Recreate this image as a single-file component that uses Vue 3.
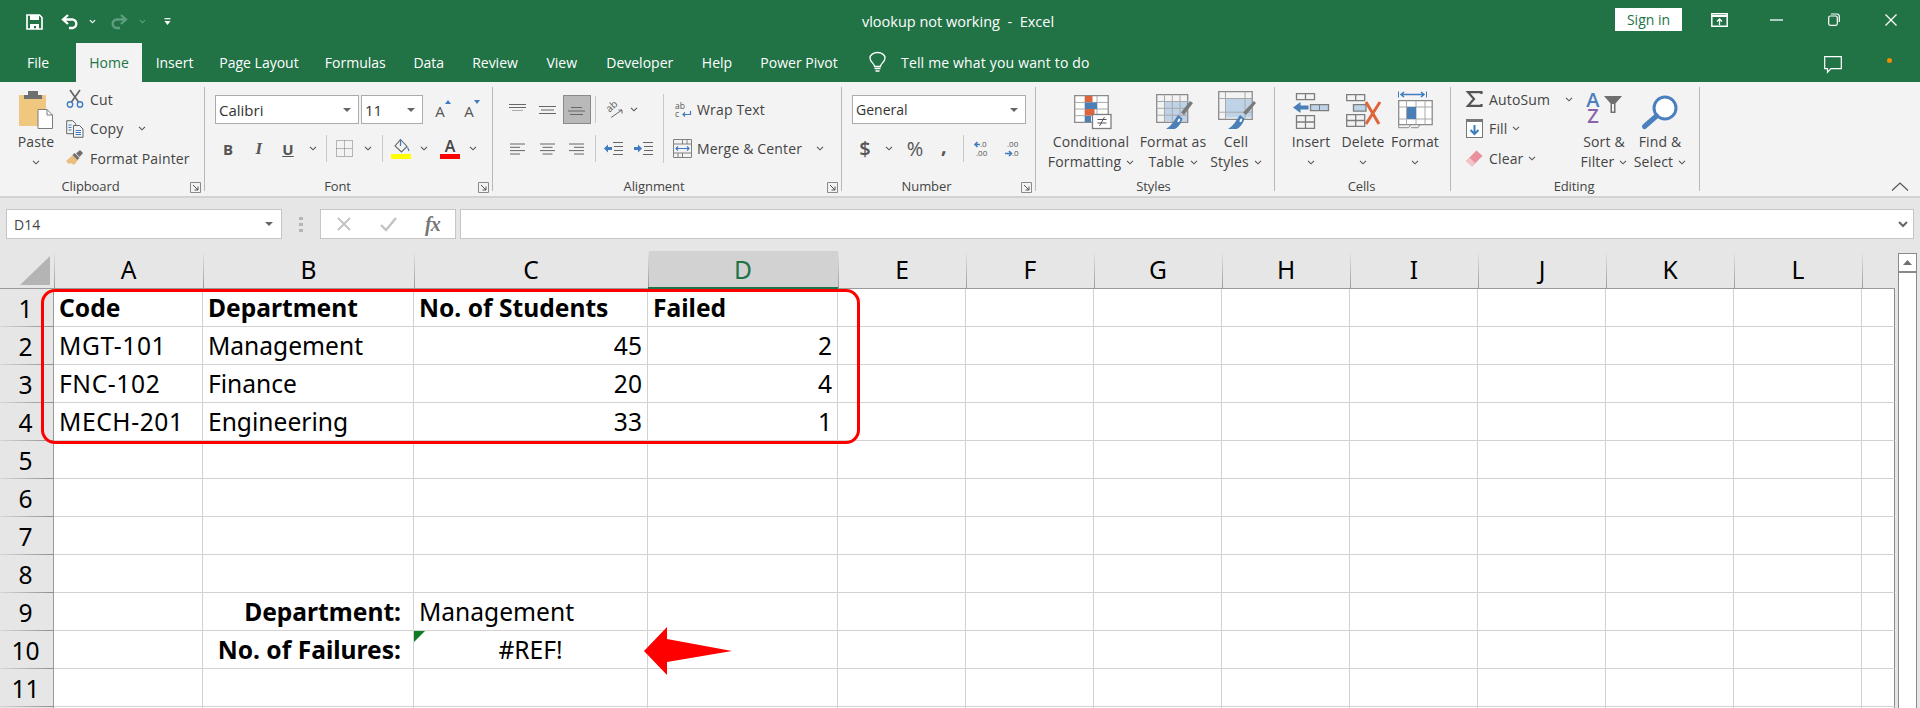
<script setup>
const tabs = [
  { t: 'File', w: 76 }, { t: 'Home', w: 66, on: true }, { t: 'Insert', w: 65 }, { t: 'Page Layout', w: 104 },
  { t: 'Formulas', w: 88.5 }, { t: 'Data', w: 58.5 }, { t: 'Review', w: 74 }, { t: 'View', w: 59.5 },
  { t: 'Developer', w: 96.5 }, { t: 'Help', w: 58 }, { t: 'Power Pivot', w: 106 }
]
const cols = [
  { n: 'A', w: 149 }, { n: 'B', w: 211 }, { n: 'C', w: 234 }, { n: 'D', w: 190 },
  { n: 'E', w: 128 }, { n: 'F', w: 128 }, { n: 'G', w: 128 }, { n: 'H', w: 128 },
  { n: 'I', w: 128 }, { n: 'J', w: 128 }, { n: 'K', w: 128 }, { n: 'L', w: 128 }, { n: '', w: 33 }
]
const gridColumns = '54px ' + cols.map(c => c.w + 'px').join(' ')
const rows = [1, 2, 3, 4, 5, 6, 7, 8, 9, 10, 11, 12]
const cells = {
  A1: ['Code', 'bold'], B1: ['Department', 'bold'], C1: ['No. of Students', 'bold'], D1: ['Failed', 'bold'],
  A2: ['MGT-101', 'code'], B2: ['Management'], C2: ['45', 'right'], D2: ['2', 'right'],
  A3: ['FNC-102', 'code'], B3: ['Finance'], C3: ['20', 'right'], D3: ['4', 'right'],
  A4: ['MECH-201', 'code'], B4: ['Engineering'], C4: ['33', 'right'], D4: ['1', 'right'],
  B9: ['Department:', 'bold label-right'], C9: ['Management'],
  B10: ['No. of Failures:', 'bold label-right'], C10: ['#REF!', 'center err']
}
const txt = k => (cells[k] ? cells[k][0] : '')
const cls = k => (cells[k] && cells[k][1]) || ''
</script>

<template>
  <div class="app">
    <svg class="defs" width="0" height="0" aria-hidden="true">
      <symbol id="chev" viewBox="0 0 8 5"><path d="M1 .8l3 3 3-3" fill="none" stroke="#555" stroke-width="1.1"/></symbol>
      <symbol id="launch" viewBox="0 0 11 11"><path d="M.5.5h10v10H.5z" fill="none" stroke="#8a8a8a"/><path d="M3 3l5 5M8 4.5V8H4.5" fill="none" stroke="#555"/></symbol>
      <symbol id="drop" viewBox="0 0 8 4"><path d="M0 0h8L4 4z" fill="#666"/></symbol>
    </svg>

    <header class="titlebar">
      <div class="qat">
        <svg class="q-save" viewBox="0 0 17 16"><path d="M1 1h12.5L16 3.5V15H1z" fill="none" stroke="#fff" stroke-width="1.7"/><path d="M4 1h9v5H4zM4 10h9v5h-3v-3H8v3H4z" fill="#fff"/></svg>
        <svg class="q-undo" viewBox="0 0 19 15"><path d="M7 1L2 5.5 7 10M2 5.5h10a5 4.5 0 0 1 0 8.5H8" fill="none" stroke="#fff" stroke-width="2.3"/></svg>
        <svg class="q-chev1" viewBox="0 0 8 5"><path d="M1 .8l3 3 3-3" fill="none" stroke="#fff" stroke-width="1.2"/></svg>
        <svg class="q-redo" viewBox="0 0 19 15"><path d="M12 1l5 4.5L12 10m5-4.5H7a5 4.5 0 0 0 0 8.5h4" fill="none" stroke="#5f9d80" stroke-width="2.3"/></svg>
        <svg class="q-chev2" viewBox="0 0 8 5"><path d="M1 .8l3 3 3-3" fill="none" stroke="#5f9d80" stroke-width="1.2"/></svg>
        <svg class="q-cust" viewBox="0 0 7 8"><path d="M.5.7h6" stroke="#fff" stroke-width="1.2"/><path d="M.5 3h6L3.500 7z" fill="#fff"/></svg>
      </div>
      <div class="doc-title">vlookup not working&nbsp; -&nbsp; Excel</div>
      <div class="win">
        <div class="signin">Sign in</div>
        <svg class="w-disp" viewBox="0 0 17 14"><path d="M.8.8h15.400v12.400H.8z" fill="none" stroke="#fff" stroke-width="1.500"/><path d="M.8 3h15.400" stroke="#fff" stroke-width="2"/><path d="M8.500 12V6M6 8.500L8.500 6 11 8.500" fill="none" stroke="#fff" stroke-width="1.300"/></svg>
        <svg class="w-min" viewBox="0 0 13 2"><path d="M0 1h13" stroke="#fff" stroke-width="1.300"/></svg>
        <svg class="w-rest" viewBox="0 0 12 13"><rect x=".7" y="3" width="8.600" height="9.300" rx="1.500" fill="none" stroke="#fff" stroke-width="1.200"/><path d="M3 1h6a2.300 2.300 0 0 1 2.300 2.300V9" fill="none" stroke="#fff" stroke-width="1.200"/></svg>
        <svg class="w-close" viewBox="0 0 12 12"><path d="M.5.500l11 11M11.500.500l-11 11" stroke="#fff" stroke-width="1.300"/></svg>
      </div>
    </header>

    <nav class="tabs">
      <div v-for="t in tabs" :key="t.t" class="tab" :class="{ on: t.on }" :style="{ width: t.w + 'px' }">{{ t.t }}</div>
      <svg class="bulb" viewBox="0 0 17 20"><path d="M5.500 14.500c0-3-4.500-4.500-4.500-8.500a7.500 5.500 0 0 1 15 0c0 4-4.500 5.500-4.500 8.500z" fill="none" stroke="#fff" stroke-width="1.300"/><path d="M5.500 16.500h6M6.500 19h4" stroke="#fff" stroke-width="1.400"/></svg>
      <div class="tell">Tell me what you want to do</div>
      <svg class="comment" viewBox="0 0 18 17"><path d="M.7.700h16.600v12H7l-3.500 3.500v-3.500H.7z" fill="none" stroke="#fff" stroke-width="1.200"/></svg>
      <span class="dot"></span>
    </nav>

    <section class="ribbon">
      <!-- Clipboard -->
      <div class="group g-clip">
        <div class="body clip-body">
          <div class="big paste">
            <div class="big-icon">
              <svg class="i-paste" viewBox="0 0 34 38"><rect y="4" width="27" height="31" rx="1" fill="#efc77f"/><path d="M9 0h10v4h4v4H5V4h4z" fill="#6f6f6f"/><path d="M19 18.500h9l5.500 5.500v13.500H19z" fill="#fff" stroke="#7d7d7d"/><path d="M28 18.500V24h5.500" fill="none" stroke="#7d7d7d"/></svg>
            </div>
            <div class="line">Paste</div>
            <div class="line"><svg class="chev"><use href="#chev"/></svg></div>
          </div>
          <div class="clip-list">
            <div class="item"><span class="slot"><svg class="i18" viewBox="0 0 18 18"><path d="M4 0l8.500 12M14 0L5.500 12" stroke="#666" stroke-width="1.700"/><circle cx="4" cy="14.500" r="2.700" fill="none" stroke="#3f7cbf" stroke-width="1.400"/><circle cx="14" cy="14.500" r="2.700" fill="none" stroke="#3f7cbf" stroke-width="1.400"/></svg></span>Cut</div>
            <div class="item"><span class="slot"><svg class="i18" viewBox="0 0 18 18"><path d="M.7.700h6l3 3v10h-9z" fill="#f3f3f3" stroke="#666"/><path d="M7.500 5.500h6l3.500 3.500v8.300H7.500z" fill="#f3f3f3" stroke="#666"/><path d="M2.500 5h3M2.500 7.500h3M2.500 10h3M9.500 10.500h5.500M9.500 12.500h5.500M9.500 14.500h5.500" stroke="#3f7cbf"/></svg></span>Copy<svg class="chev copy-chev"><use href="#chev"/></svg></div>
            <div class="item"><span class="slot"><svg class="i18" viewBox="0 0 18 16"><path d="M0 11l7-6 5 5-4 5-3-2-2 1z" fill="#e8bd7d"/><path d="M6.500 5l5 5 2-2-5-5z" fill="#6f6f6f"/><path d="M10 3.500l4-3.500 3 3-3.500 4z" fill="#6f6f6f"/></svg></span>Format Painter</div>
          </div>
        </div>
        <div class="label-row"><span class="label">Clipboard</span><svg class="launch"><use href="#launch"/></svg></div>
      </div>

      <!-- Font -->
      <div class="group g-font">
        <div class="body tool-body">
          <div class="font-top">
            <div class="box font-name">Calibri<svg class="drop"><use href="#drop"/></svg></div>
            <div class="box font-size">11<svg class="drop"><use href="#drop"/></svg></div>
            <div class="grow-a">A<svg class="tri" viewBox="0 0 6 4"><path d="M3 0l3 4H0z" fill="#3f7cbf"/></svg></div>
            <div class="grow-a">A<svg class="tri" viewBox="0 0 6 4"><path d="M0 0h6L3 4z" fill="#3f7cbf"/></svg></div>
          </div>
          <div class="font-row">
            <span class="fmt b">B</span>
            <span class="fmt i">I</span>
            <span class="fmt u">U</span>
            <span class="ctr"><svg class="chev"><use href="#chev"/></svg></span>
            <span class="sep-t"></span>
            <svg class="i-border" viewBox="0 0 17 17"><path d="M.5.500h16v16H.5zM8.500.500v16M.5 8.500h16" fill="none" stroke="#777" stroke-dasharray="1 1"/></svg>
            <span class="ctr"><svg class="chev"><use href="#chev"/></svg></span>
            <span class="sep-t"></span>
            <svg class="i-fill" viewBox="0 0 20 21"><path d="M9.500 1.500l6.500 7-5.500 5.500L4 8z" fill="#f3f3f3" stroke="#666" stroke-width="1.100"/><path d="M9.500 1.500V8" stroke="#3f7cbf" stroke-width="1.300"/><path d="M16.500 9.500c1 1.500 1.500 2.500 1 3.500" stroke="#3f7cbf" stroke-width="1.300" fill="none"/><rect y="16" width="20" height="5" fill="#ffff00"/></svg>
            <span class="ctr"><svg class="chev"><use href="#chev"/></svg></span>
            <span class="color-a">A</span>
            <span class="ctr"><svg class="chev"><use href="#chev"/></svg></span>
          </div>
        </div>
        <div class="label-row"><span class="label">Font</span><svg class="launch"><use href="#launch"/></svg></div>
      </div>

      <!-- Alignment -->
      <div class="group g-align">
        <div class="body align-body">
          <div class="align-grid">
            <svg class="al" viewBox="0 0 17 14"><path d="M0 1.500h17M0 4.500h17" stroke="#666"/><path d="M3 7.500h11" stroke="#aaa"/></svg>
            <svg class="al" viewBox="0 0 17 14"><path d="M0 3.500h17M2 7h13M0 10.500h17" stroke="#666"/></svg>
            <span class="al-on"><svg class="al" viewBox="0 0 17 14"><path d="M3 4.500h11M0 8h17M2 11.500h13" stroke="#666"/></svg></span>
            <span class="sep-a"></span>
            <svg class="orient" viewBox="0 0 19 17"><text x="3" y="9" transform="rotate(-42 8 7)" class="svgtxt" font-size="10">ab</text><path d="M7 16.500L18 9M18 9h-3.500M18 9v3.500" fill="none" stroke="#666"/></svg>
            <span class="ctr ori-chev"><svg class="chev"><use href="#chev"/></svg></span>
            <svg class="al2" viewBox="0 0 15 12"><path d="M0 1h15M0 4.300h10M0 7.600h15M0 11h10" stroke="#666"/></svg>
            <svg class="al2" viewBox="0 0 15 12"><path d="M0 1h15M2.500 4.300h10M0 7.600h15M2.500 11h10" stroke="#666"/></svg>
            <svg class="al2" viewBox="0 0 15 12"><path d="M0 1h15M5 4.300h10M0 7.600h15M5 11h10" stroke="#666"/></svg>
            <span class="sep-a"></span>
            <svg class="indent" viewBox="0 0 19 16"><path d="M9 1.500h10M10 5.500h9M10 9.500h9M9 13.500h10" stroke="#666"/><path d="M0 7.500l4-4v2.500h4v3H4v2.500z" fill="#3f7cbf"/></svg>
            <span class="ctr"><svg class="indent" viewBox="0 0 19 16"><path d="M9 1.500h10M10 5.500h9M10 9.500h9M9 13.500h10" stroke="#666"/><path d="M8 7.500l-4-4v2.500H0v3h4v2.500z" fill="#3f7cbf"/></svg></span>
          </div>
          <span class="vsep"></span>
          <div class="wrap-col">
            <div class="item wrap-item"><svg class="i-wrap" viewBox="0 0 17 16"><text x="0" y="6.500" class="svgtxt" font-size="8.500">ab</text><text x="0" y="15" class="svgtxt" font-size="8.500">c</text><path d="M15.500 9v3.500H8M10 10.500l-2 2 2 2" fill="none" stroke="#3f7cbf" stroke-width="1.200"/></svg>Wrap Text</div>
            <div class="item merge-item"><svg class="i-merge" viewBox="0 0 19 19"><path d="M.5.500h18v18H.5zM.5 5h18M.5 14h18M9.500.500V5M9.500 14v4.500M5 14v4.500M14 .500V5" fill="#f3f3f3" stroke="#808080"/><path d="M3 9.500h13M5 7.500l-2 2 2 2M14 7.500l2 2-2 2" fill="none" stroke="#3f7cbf" stroke-width="1.200"/></svg>Merge &amp; Center<svg class="chev merge-chev"><use href="#chev"/></svg></div>
          </div>
        </div>
        <div class="label-row"><span class="label">Alignment</span><svg class="launch"><use href="#launch"/></svg></div>
      </div>

      <!-- Number -->
      <div class="group g-num">
        <div class="body tool-body">
          <div class="box num-box">General<svg class="drop"><use href="#drop"/></svg></div>
          <div class="num-row">
            <span class="ctr sym dollar">$</span>
            <span class="ctr"><svg class="chev"><use href="#chev"/></svg></span>
            <span class="ctr sym">%</span>
            <span class="ctr sym comma">,</span>
            <span class="sep-n"></span>
            <svg class="i-dec" viewBox="0 0 16 18"><text x="6" y="7" class="svgtxt" font-size="8">.0</text><text x="2" y="16" class="svgtxt" font-size="8">.00</text><path d="M6 4.500H1M3.500 2L1 4.500 3.500 7" fill="none" stroke="#3f7cbf" stroke-width="1.600"/></svg>
            <svg class="i-dec" viewBox="0 0 16 18"><text x="3" y="7" class="svgtxt" font-size="8">.00</text><text x="8" y="16" class="svgtxt" font-size="8">.0</text><path d="M1 13.500h6M5 11l2.500 2.500L5 16" fill="none" stroke="#3f7cbf" stroke-width="1.600"/></svg>
          </div>
        </div>
        <div class="label-row"><span class="label">Number</span><svg class="launch"><use href="#launch"/></svg></div>
      </div>

      <!-- Styles -->
      <div class="group g-styles">
        <div class="body big-row">
          <div class="big s-cond">
            <div class="big-icon">
              <svg class="i-cond" viewBox="0 0 38 34"><path d="M.7.700h33.500v26.600H.7z" fill="#fff" stroke="#8a8a8a" stroke-width="1.300"/><path d="M.7 7.400h33.500M.7 14h33.500M.7 20.700h33.500M11 .700v26.600M23 .700v26.600" stroke="#a8a8a8"/><rect x="11" y="1" width="7.500" height="6" fill="#e0643a"/><rect x="11" y="7.500" width="12" height="6.500" fill="#4a7fb8"/><rect x="11" y="14" width="9.500" height="6.500" fill="#e0643a"/><rect x="11" y="21" width="6" height="6" fill="#4a7fb8"/><rect x="18.500" y="19.500" width="18.500" height="14" fill="#fff" stroke="#7d7d7d" stroke-width="1.300"/><path d="M23.500 24.500h9M23.500 28h9M30.500 22l-5 9" stroke="#555" stroke-width="1"/></svg>
            </div>
            <div class="line">Conditional</div>
            <div class="line">Formatting<svg class="chev tchev"><use href="#chev"/></svg></div>
          </div>
          <div class="big s-table">
            <div class="big-icon">
              <svg class="i-table" viewBox="0 0 38 35"><rect x="8.500" y="7.500" width="23" height="20" fill="#bfd3e8"/><path d="M.7.700h31v27.600H.7z" fill="none" stroke="#8a8a8a" stroke-width="1.300"/><path d="M.7 7.500h31M.7 14.300h31M.7 21.200h31M8.500.700v27.600M16.300.700v27.600M24 .700v27.600" stroke="#a8a8a8"/><path d="M37 9l-9 12-3-2.500L34 7z" fill="#7a7a7a"/><path d="M22 21l4.500 3.500c-1 5-5 9.500-8 10.500H10c5-3 8-8 12-14z" fill="#4a7fb8"/><path d="M21.500 28c0-2 1-3.500 2-3.500s1 2-.5 3.500z" fill="#fff"/></svg>
            </div>
            <div class="line">Format as</div>
            <div class="line">Table<svg class="chev tchev"><use href="#chev"/></svg></div>
          </div>
          <div class="big s-cell">
            <div class="big-icon">
              <svg class="i-cell" viewBox="0 0 38 38"><rect x="7.500" y="7.500" width="26" height="19" fill="#bfd3e8"/><path d="M.7.700h33.500v27.600H.7z" fill="none" stroke="#8a8a8a" stroke-width="1.300"/><path d="M.7 7.500h33.500M.7 21.200h33.500M7.500.700v27.600M27 .700v27.600" stroke="#a8a8a8"/><path d="M38 12l-10 12-3-2.500L36 10z" fill="#7a7a7a"/><path d="M22 24l4.500 3.500c-1 5-5 9.500-8 10.500H10c5-3 8-8 12-14z" fill="#4a7fb8"/><path d="M21.500 31c0-2 1-3.500 2-3.500s1 2-.5 3.500z" fill="#fff"/></svg>
            </div>
            <div class="line">Cell</div>
            <div class="line">Styles<svg class="chev tchev"><use href="#chev"/></svg></div>
          </div>
        </div>
        <div class="label-row"><span class="label">Styles</span></div>
      </div>

      <!-- Cells -->
      <div class="group g-cells">
        <div class="body big-row">
          <div class="big c-ins">
            <div class="big-icon">
              <svg class="i-ins" viewBox="0 0 37 36"><path d="M3.500.700h18v6h-18zM12.500.700v6M3.500 22.700h18v12.600h-18zM3.500 29h18M12.500 22.700v12.600" fill="none" stroke="#7d7d7d" stroke-width="1.300"/><path d="M17.500 11.700h18v6h-18z" fill="#bfd3e8" stroke="#7d7d7d" stroke-width="1.300"/><path d="M26.500 11.700v6" stroke="#7d7d7d"/><path d="M0 14.500L7.500 9v3.500h8v4h-8V20z" fill="#4a7fb8"/></svg>
            </div>
            <div class="line">Insert</div>
            <div class="line"><svg class="chev"><use href="#chev"/></svg></div>
          </div>
          <div class="big c-del">
            <div class="big-icon">
              <svg class="i-del" viewBox="0 0 36 33"><path d="M.7.700h18v6H.7zM9.700.700v6M.7 20.700h18v11.600H.7zM.7 26.500h18M9.700 20.700v11.600" fill="none" stroke="#7d7d7d" stroke-width="1.300"/><path d="M7.500 10.700h12.500v6.500H7.500z" fill="#bfd3e8" stroke="#7d7d7d" stroke-width="1.300"/><path d="M20 8l13 22M34 8L20 30" stroke="#e0643a" stroke-width="3"/></svg>
            </div>
            <div class="line">Delete</div>
            <div class="line"><svg class="chev"><use href="#chev"/></svg></div>
          </div>
          <div class="big c-fmt">
            <div class="big-icon">
              <svg class="i-fmt" viewBox="0 0 35 38"><path d="M.5.500v6M28.500.500v6" stroke="#3f7cbf"/><path d="M3 3.500h23M6 1l-3 2.500L6 6M23 1l3 2.500L23 6" fill="none" stroke="#3f7cbf" stroke-width="1.500"/><path d="M.7 9.700h33.500v24H.7z" fill="#fff" stroke="#8a8a8a" stroke-width="1.300"/><path d="M.7 16h33.500M.7 28h33.500M8.500 9.700v24M18 9.700v24M27 9.700v24" stroke="#a8a8a8"/><rect x="9" y="16" width="9" height="12" fill="#4a7fb8"/><path d="M.7 33.700v3h10l2-3M13 36.700h7l2-3" fill="none" stroke="#8a8a8a"/></svg>
            </div>
            <div class="line">Format</div>
            <div class="line"><svg class="chev"><use href="#chev"/></svg></div>
          </div>
        </div>
        <div class="label-row"><span class="label">Cells</span></div>
      </div>

      <!-- Editing -->
      <div class="group g-edit">
        <div class="body edit-body">
          <div class="edit-list">
            <div class="item"><span class="slot"><svg class="i-sum" viewBox="0 0 16 16"><path d="M15.500 3V1.200H2l6 6.800-6 6.800h13.500V13" fill="none" stroke="#555" stroke-width="2.200"/></svg></span>AutoSum<svg class="chev sum-chev"><use href="#chev"/></svg></div>
            <div class="item"><span class="slot"><svg class="i-filld" viewBox="0 0 17 19"><rect x=".5" y=".5" width="16" height="18" fill="#fff" stroke="#777"/><rect width="17" height="3" fill="#777"/><path d="M8.500 6v9M4.500 11l4 4 4-4" fill="none" stroke="#3f7cbf" stroke-width="2"/></svg></span>Fill<svg class="chev tchev"><use href="#chev"/></svg></div>
            <div class="item"><span class="slot"><svg class="i-erase" viewBox="0 0 17 17"><path d="M0 11L10.500 0.500 16.500 6 6 16.500z" fill="#e8909c"/><path d="M0 11l3.500-3.500 5.500 5.500L6 16.500z" fill="#f3c3ca"/></svg></span>Clear<svg class="chev tchev"><use href="#chev"/></svg></div>
          </div>
          <div class="big e-sort">
            <div class="big-icon sort-icon">
              <span class="az"><span class="az-a">A</span><span class="az-z">Z</span></span>
              <svg class="i-funnel" viewBox="0 0 18 17"><path d="M0 0h18l-6.500 7.500V17h-5V7.500z" fill="#6f6f6f"/><path d="M8 8h2v7.500H8z" fill="#f3f3f3"/></svg>
            </div>
            <div class="line">Sort &amp;</div>
            <div class="line">Filter<svg class="chev tchev"><use href="#chev"/></svg></div>
          </div>
          <div class="big e-find">
            <div class="big-icon">
              <svg class="i-find" viewBox="0 0 36 34"><circle cx="23" cy="13" r="11" fill="#fff" stroke="#4a80bd" stroke-width="3"/><path d="M2.500 31.500L14.500 21" stroke="#4a80bd" stroke-width="5" stroke-linecap="round"/></svg>
            </div>
            <div class="line">Find &amp;</div>
            <div class="line">Select<svg class="chev tchev"><use href="#chev"/></svg></div>
          </div>
        </div>
        <div class="label-row"><span class="label">Editing</span></div>
      </div>

      <svg class="collapse" viewBox="0 0 18 9"><path d="M1 8.500L9 1l8 7.500" fill="none" stroke="#555" stroke-width="1.200"/></svg>
    </section>

    <section class="fbar">
      <div class="name-box">D14<svg class="drop"><use href="#drop"/></svg></div>
      <div class="grip"><i></i><i></i><i></i></div>
      <div class="fx-box">
        <svg class="f-x" viewBox="0 0 14 14"><path d="M1 1l12 12M13 1L1 13" stroke="#c3c3c3" stroke-width="2"/></svg>
        <svg class="f-c" viewBox="0 0 17 14"><path d="M1 8l5 5L16 1" fill="none" stroke="#c3c3c3" stroke-width="2.300"/></svg>
        <span class="f-fx">fx</span>
      </div>
      <div class="f-input"><svg class="f-chev" viewBox="0 0 10 7"><path d="M1 1l4 4 4-4" fill="none" stroke="#666" stroke-width="2"/></svg></div>
    </section>

    <section class="sheet">
      <div class="grid-wrap">
        <div class="grid" :style="{ gridTemplateColumns: gridColumns }">
          <div class="corner"><svg class="corner-tri" viewBox="0 0 30 29"><path d="M0 29L30 0v29z" fill="#b4b4b4"/></svg></div>
          <div v-for="c in cols" :key="c.n" class="col-head" :class="{ active: c.n === 'D', blank: !c.n }">{{ c.n }}</div>
          <template v-for="r in rows" :key="r">
            <div class="row-head">{{ r < 12 ? r : '' }}</div>
            <div v-for="c in cols" :key="c.n + r" class="cell" :class="[cls(c.n + r), { last: !c.n }]">{{ txt(c.n + r) }}</div>
          </template>
        </div>
        <div class="red-box"></div>
        <svg class="red-arrow" viewBox="0 0 88 48"><path d="M0 24L23 0v12l65 12-65 11v13z" fill="#ff0000"/></svg>
      </div>
      <div class="vscroll">
        <div class="vs-up"><svg class="vs-tri" viewBox="0 0 9 5"><path d="M4.500 0L9 5H0z" fill="#707070"/></svg></div>
      </div>
    </section>
  </div>
</template>

<style>
html, body { margin: 0; padding: 0; background: #e6e6e6; }
</style>

<style scoped>
.app { width: 1920px; height: 708px; overflow: hidden; background: #e6e6e6; font-family: "Open Sans", "Noto Sans", sans-serif; color: #444; font-size: 14px; letter-spacing: .15px; }
.defs { position: absolute; }
svg { display: block; flex: none; overflow: visible; }
.svgtxt { font-family: "Open Sans", sans-serif; fill: #555; letter-spacing: 0; }

.titlebar { height: 43px; background: #217346; display: grid; grid-template-columns: 1fr auto 1fr; align-items: flex-start; color: #fff; }
.qat { display: flex; align-items: center; height: 43px; padding-left: 26px; }
.q-save { width: 17px; height: 16px; }
.q-undo { width: 19px; height: 15px; margin-left: 18px; }
.q-chev1 { width: 7px; height: 5px; margin-left: 9px; }
.q-redo { width: 19px; height: 15px; margin-left: 13px; }
.q-chev2 { width: 7px; height: 5px; margin-left: 11px; }
.q-cust { width: 7px; height: 8px; margin-left: 18px; }
.doc-title { font-size: 14.500px; letter-spacing: 0; line-height: 43px; margin-right: 4px; white-space: nowrap; }
.win { display: flex; align-items: center; justify-content: flex-end; height: 39px; padding-right: 23px; }
.signin { width: 67px; height: 23px; background: #fff; color: #217346; text-align: center; line-height: 23px; font-size: 14px; letter-spacing: 0; }
.w-disp { width: 17px; height: 14px; margin-left: 29px; }
.w-min { width: 13px; height: 2px; margin-left: 42px; }
.w-rest { width: 12px; height: 13px; margin-left: 45px; }
.w-close { width: 12px; height: 12px; margin-left: 45px; }

.tabs { height: 39px; background: #217346; display: flex; align-items: center; color: #fff; font-size: 14px; letter-spacing: 0; }
.tab { height: 39px; line-height: 40px; text-align: center; flex: none; }
.tab.on { background: #f3f3f3; color: #217346; }
.bulb { width: 17px; height: 20px; margin-left: 17px; margin-top: -1px; }
.tell { margin-left: 15px; letter-spacing: .17px; }
.comment { width: 18px; height: 17px; margin-left: auto; margin-right: 45px; margin-top: 4px; }
.dot { width: 5px; height: 5px; border-radius: 50%; background: #f08a00; margin-right: 28px; margin-top: -4px; }

.ribbon { height: 114px; box-sizing: content-box; background: #f3f3f3; border-bottom: 2px solid #d2d2d2; padding-top: 0; display: flex; align-items: flex-start; }
.group { box-sizing: border-box; height: 104px; margin-top: 5px; border-right: 1px solid #b8b8b8; flex: none; display: flex; flex-direction: column; }
.g-clip { width: 205px; }
.g-font { width: 288px; }
.g-align { width: 349px; }
.g-num { width: 194px; }
.g-styles { width: 239px; }
.g-cells { width: 176px; }
.g-edit { width: 249px; }
.body { height: 91px; flex: none; display: flex; }
.label-row { height: 16px; line-height: 16px; display: flex; align-items: center; font-size: 13px; letter-spacing: -.1px; }
.label { flex: 1; text-align: center; }
.launch { width: 11px; height: 11px; margin-right: 3px; margin-top: 2px; }
.g-clip .label { padding-right: 9px; }
.g-font .label { padding-right: 8px; }
.g-align .label { padding-right: 12px; }
.g-num .label { padding-right: 10px; }
.g-styles .label { padding-right: 3px; }
.g-cells .label { padding-right: 2px; }
.g-edit .label { padding-right: 2px; }

.big { display: flex; flex-direction: column; align-items: center; flex: none; }
.big-icon { height: 42px; margin-bottom: 3px; display: flex; align-items: flex-end; justify-content: center; }
.line { height: 20px; line-height: 20px; display: flex; align-items: center; justify-content: center; white-space: nowrap; }
.chev { width: 8px; height: 5px; }
.tchev { margin-left: 5px; }
.drop { width: 8px; height: 4px; margin-left: auto; }
.ctr { display: flex; align-items: center; justify-content: center; }

.clip-body { padding-left: 14px; }
.paste { width: 44px; }
.i-paste { width: 34px; height: 38px; }
.clip-list { margin-left: 8px; display: flex; flex-direction: column; gap: 5.500px; }
.item { height: 24px; display: flex; align-items: center; white-space: nowrap; }
.slot { width: 24px; flex: none; display: flex; }
.i18 { width: 18px; height: 18px; }
.copy-chev { margin-left: 15px; }

.tool-body { flex-direction: column; padding-top: 8px; padding-left: 10px; box-sizing: border-box; }
.box { height: 29px; box-sizing: border-box; border: 1px solid #ababab; background: #fff; display: flex; align-items: center; padding: 0 7px 0 3px; flex: none; font-size: 14px; letter-spacing: 0; color: #333; }
.font-top { display: flex; align-items: center; }
.font-name { width: 144px; font-size: 15px; }
.font-size { width: 62px; margin-left: 2px; padding-left: 3px; font-size: 15px; }
.grow-a { width: 26px; margin-left: 4px; font-size: 15px; color: #555; display: flex; justify-content: center; position: relative; height: 22px; line-height: 24px; }
.grow-a + .grow-a { margin-left: 3px; }
.tri { width: 6px; height: 4px; position: absolute; right: 2px; top: 1px; }
.font-row { margin-top: 11px; height: 27px; display: grid; grid-template-columns: 26px 36px 22px 27px 10px 17px 29px 9px 20px 26px 26px 20px; align-items: center; justify-items: center; }
.fmt { font-size: 15px; color: #555; }
.b { font-weight: 700; }
.i { font-family: "Liberation Serif", serif; font-style: italic; font-weight: 700; font-size: 17px; }
.u { text-decoration: underline; font-weight: 700; }
.sep-t { width: 1px; height: 27px; background: #c8c8c8; justify-self: start; }
.i-border { width: 17px; height: 17px; }
.i-fill { width: 20px; height: 21px; }
.color-a { width: 20px; height: 21px; box-sizing: border-box; border-bottom: 5px solid #ff0000; font-size: 16px; line-height: 17px; text-align: center; color: #444; font-weight: 600; }

.align-body { padding-top: 8px; padding-left: 10px; box-sizing: border-box; }
.align-grid { width: 160px; flex: none; display: grid; grid-template-columns: 29px 30px 29px 13px 19px 40px; grid-template-rows: 29px 27px; row-gap: 11px; align-items: center; justify-items: center; }
.al { width: 17px; height: 14px; }
.al-on { width: 28px; height: 29px; box-sizing: border-box; background: #b9b9b9; border: 1px solid #8a8a8a; display: flex; align-items: center; justify-content: center; }
.al2 { width: 15px; height: 12px; }
.sep-a { width: 1px; height: 27px; background: #c8c8c8; justify-self: start; margin-left: 4px; }
.orient { width: 19px; height: 17px; }
.ori-chev { justify-self: start; margin-left: 7px; }
.indent { width: 19px; height: 16px; }
.vsep { width: 1px; height: 69px; background: #c8c8c8; margin-top: -1px; flex: none; }
.wrap-col { margin-left: 9px; display: flex; flex-direction: column; }
.wrap-item { height: 29px; }
.merge-item { height: 27px; margin-top: 11px; }
.i-wrap { width: 17px; height: 16px; margin-left: 2px; margin-right: 5px; }
.i-merge { width: 19px; height: 19px; margin-right: 5px; }
.merge-chev { margin-left: 14px; }

.num-box { width: 174px; }
.num-row { margin-top: 11px; height: 27px; display: grid; grid-template-columns: 26px 22px 30px 28px 16px 30px 16px; align-items: center; justify-items: center; }
.sym { font-size: 20px; color: #555; line-height: 27px; }
.dollar { font-weight: 600; }
.comma { font-weight: 700; margin-top: -6px; }
.sep-n { width: 1px; height: 27px; background: #c8c8c8; justify-self: start; margin-left: 5px; }
.i-dec { width: 16px; height: 18px; justify-self: start; }

.big-row { padding-left: 10px; }
.s-cond { width: 90px; }
.s-table { width: 74px; }
.s-cell { width: 52px; }
.i-cond { width: 38px; height: 34px; margin-left: 4px; }
.i-table { width: 38px; height: 35px; margin-left: 3px; }
.i-cell { width: 38px; height: 38px; margin-left: 2px; }
.g-cells .big-row { padding-left: 11px; }
.c-ins { width: 50px; }
.c-del { width: 54px; }
.c-fmt { width: 50px; }
.i-ins { width: 37px; height: 36px; }
.i-del { width: 36px; height: 33px; margin-left: 2px; margin-bottom: 2px; }
.i-fmt { width: 35px; height: 38px; }

.edit-body { padding-left: 15px; }
.edit-list { width: 110px; flex: none; display: flex; flex-direction: column; gap: 5.500px; }
.edit-list .slot { width: 23px; }
.i-sum { width: 16px; height: 16px; }
.i-filld { width: 17px; height: 19px; }
.i-erase { width: 17px; height: 17px; }
.sum-chev { margin-left: 15px; }
.e-sort, .e-find { width: 56px; }
.sort-icon { align-items: center; }
.az { display: flex; flex-direction: column; font-size: 20px; line-height: 16px; font-weight: 600; width: 14px; text-align: center; }
.az-a, .az-z { height: 16px; overflow: visible; }
.az-a { color: #4a80bd; }
.az-z { color: #8a63ad; }
.i-funnel { width: 18px; height: 17px; margin-left: 4px; margin-top: -7px; }
.i-find { width: 36px; height: 34px; }
.collapse { width: 18px; height: 9px; margin-left: auto; margin-right: 11px; margin-top: 100px; }

.fbar { height: 53px; box-sizing: border-box; padding: 11px 6px 0 6px; display: flex; align-items: flex-start; background: #e6e6e6; }
.name-box { width: 276px; height: 30px; box-sizing: border-box; background: #fff; border: 1px solid #c6c6c6; display: flex; align-items: center; padding: 0 8px 0 7px; font-size: 14px; letter-spacing: 0; color: #444; flex: none; }
.grip { width: 38px; height: 30px; flex: none; display: flex; flex-direction: column; align-items: center; justify-content: center; gap: 3px; }
.grip i { width: 4px; height: 3px; background: #b5b5b5; }
.fx-box { width: 136px; height: 30px; box-sizing: border-box; background: #fff; border: 1px solid #c6c6c6; display: flex; align-items: center; flex: none; }
.f-x { width: 14px; height: 14px; margin-left: 16px; }
.f-c { width: 17px; height: 14px; margin-left: 29px; }
.f-fx { font-family: "Liberation Serif", serif; font-style: italic; font-weight: 700; font-size: 20px; color: #777; margin-left: 28px; letter-spacing: -1px; }
.f-input { width: 1454px; margin-left: 4px; height: 30px; box-sizing: border-box; background: #fff; border: 1px solid #c6c6c6; display: flex; align-items: center; justify-content: flex-end; padding-right: 5px; flex: none; }
.f-chev { width: 10px; height: 7px; }

.sheet { display: flex; align-items: flex-start; height: 457px; overflow: hidden; }
.grid-wrap { width: 1895px; position: relative; flex: none; }
.grid { display: grid; grid-auto-rows: 38px; font-family: "Noto Sans", "Open Sans", sans-serif; font-size: 24.600px; color: #000; letter-spacing: 0; }
.corner { position: relative; background: #e6e6e6; border-bottom: 1px solid #9a9a9a; display: flex; }
.corner-tri { width: 30px; height: 29px; margin-left: 20px; margin-top: 5px; }
.col-head { position: relative; background: #e6e6e6; border-bottom: 1px solid #9a9a9a; box-sizing: border-box; display: flex; align-items: center; justify-content: center; }
.col-head::before { content: ""; position: absolute; left: 0; top: 0; bottom: 0; width: 1px; background: linear-gradient(#e6e6e6, #9a9a9a); }
.col-head.active { background: #d2d2d2; color: #217346; border-bottom: 2px solid #217346; }
.col-head.blank { background: #e6e6e6; }
.row-head { position: relative; background: #e6e6e6; box-sizing: border-box; border-right: 1px solid #9a9a9a; display: flex; align-items: center; justify-content: center; padding-right: 2px; }
.row-head::after { content: ""; position: absolute; left: 0; right: 0; bottom: 0; height: 1px; background: linear-gradient(to right, #d6d6d6, #8f8f8f); }
.cell { position: relative; box-sizing: border-box; background: #fff; border-right: 1px solid #d2d2d2; border-bottom: 1px solid #d2d2d2; display: flex; align-items: center; padding: 0 5px; white-space: nowrap; overflow: visible; }
.cell.last { border-right: 1px solid #8a8a8a; }
.bold { font-weight: 700; }
.code { letter-spacing: .6px; }
.right { justify-content: flex-end; }
.center { justify-content: center; }
.label-right { justify-content: flex-end; padding-right: 12px; }
.err::before { content: ""; position: absolute; left: 0; top: 0; width: 0; height: 0; border-top: 11px solid #0f7d23; border-right: 11px solid transparent; }
.red-box { position: absolute; left: 41px; top: 38px; width: 819px; height: 155px; box-sizing: border-box; border: 3.500px solid #ff0000; border-radius: 14px; }
.red-arrow { position: absolute; left: 644px; top: 376px; width: 88px; height: 48px; }
.vscroll { width: 19px; margin-left: 3px; margin-top: 2px; height: 460px; box-sizing: border-box; background: #fff; border: 1px solid #8a8a8a; flex: none; }
.vs-up { height: 19px; box-sizing: border-box; border-bottom: 2px solid #8a8a8a; display: flex; align-items: center; justify-content: center; }
.vs-tri { width: 9px; height: 5px; }
</style>
